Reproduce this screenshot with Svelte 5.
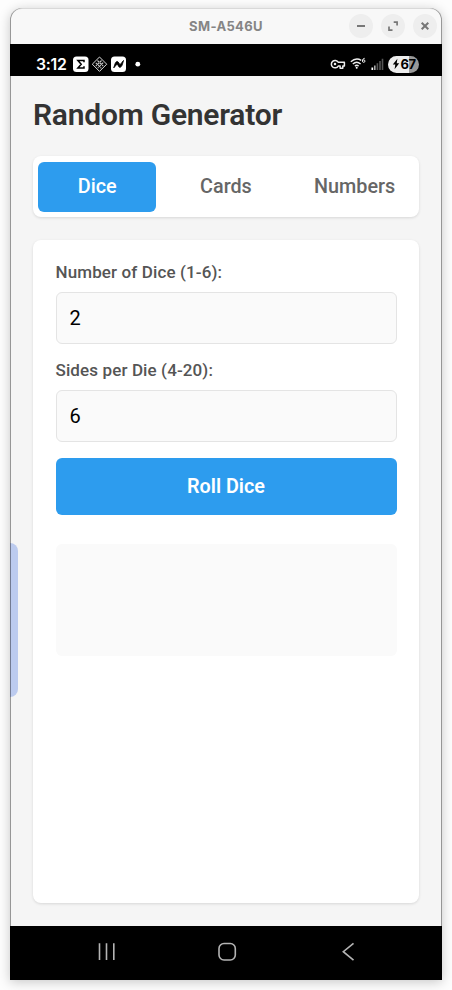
<script>
  let tab = $state('Dice');
  let dice = $state('2');
  let sides = $state('6');
  const tabs = ['Dice', 'Cards', 'Numbers'];
</script>

<div class="desktop">
  <div class="window">
    <header class="titlebar">
      <span class="device">SM-A546U</span>
      <div class="controls">
        <button aria-label="Minimize"><svg viewBox="0 0 24 24"><path d="M8 12h8" /></svg></button>
        <button aria-label="Maximize"><svg viewBox="0 0 24 24"><path d="M12.700 8.200h3.400v3.300M8 12.500v3.600h3.500" class="thin" /></svg></button>
        <button aria-label="Close"><svg viewBox="0 0 24 24"><path d="M8.700 8.700l6.600 6.600M15.300 8.700l-6.600 6.600" /></svg></button>
      </div>
    </header>

    <div class="status">
      <span class="clock">3:12</span>
      <svg class="notes" width="70" height="18" viewBox="0 0 70 18">
        <rect x="0" y="1.500" width="15.500" height="15.500" rx="3.500" fill="#fff" />
        <path d="M11 7.200V5.500H4.900L8.200 9.200 4.900 13h6.100v-1.700" fill="none" stroke="#000" stroke-width="1.500" />
        <path d="M26.500 2l7.200 7.200-7.200 7.200-7.200-7.200z" fill="none" stroke="#ddd" stroke-width="1" />
        <path d="M24.500 5.500l5.700 5.700M22.800 7.800l5.500 5.500M28.500 5.500l-5.700 5.700M30.200 7.700l-5.500 5.500" fill="none" stroke="#ccc" stroke-width="1.100" stroke-dasharray="2.500 .8" />
        <rect x="38" y="1.500" width="15" height="15.500" rx="3.500" fill="#fff" />
        <path d="M40.800 12.800c.8-2.500 1.500-6.300 3.400-6.300 1.500 0 1.700 2.900 2.800 2.900S48.600 7.500 50.500 5.500c-.8 2.700-1.600 6.800-3.600 6.800-1.500 0-1.600-2.900-2.700-2.900-1 0-1.600 1.600-3.400 3.400z" fill="#000" stroke="#000" stroke-width=".9" />
        <circle cx="64.800" cy="9.200" r="2.400" fill="#fff" />
      </svg>
      <svg class="signals" width="54" height="18" viewBox="0 0 54 18">
        <path d="M8.200 7.200a3.700 3.700 0 1 0 0 3.900h1.900v2.100h2.700v-2.100h1.600V7.200z" fill="none" stroke="#eee" stroke-width="1.500" stroke-linejoin="round" />
        <circle cx="5" cy="9.100" r="1.250" fill="#eee" />
        <path d="M20.800 6.800c3.300-3.100 7.100-3.500 10.400-1.500M22.800 9c2.300-2.100 5.500-2.100 7.800 0M24.900 11.100c1.200-1 2.500-1 3.700 0" fill="none" stroke="#eee" stroke-width="1.400" />
        <circle cx="26.700" cy="12.800" r="1" fill="#fff" />
        <path d="M34.700 3.300c-1.700.1-2.300 1.400-2.300 2.700" fill="none" stroke="#eee" stroke-width="1" />
        <circle cx="33.700" cy="6.100" r="1.250" fill="none" stroke="#eee" stroke-width="1" />
        <path d="M42.300 12.500V15" stroke="#fff" stroke-width="1.700" />
        <path d="M44.800 10.500V15" stroke="#aaa" stroke-width="1.600" />
        <path d="M47.400 8.200V15M50 6V15M52.500 3.800V15" stroke="#555" stroke-width="1.600" />
      </svg>
      <div class="battery">
        <svg width="8" height="12" viewBox="0 0 8 12"><path d="M5.400.8L.8 6.500h2.500L2.600 11.200 7.200 5.300H4.700z" fill="#000" /></svg>
        <span>67</span>
      </div>
    </div>

    <main class="app">
      <div class="edge-panel"></div>
      <h1>Random Generator</h1>
      <nav class="tabs">
        {#each tabs as name}
          <button class:active={tab === name} onclick={() => (tab = name)}>{name}</button>
        {/each}
      </nav>
      <section class="card">
        <label for="dice">Number of Dice (1-6):</label>
        <input id="dice" bind:value={dice} />
        <label for="sides">Sides per Die (4-20):</label>
        <input id="sides" bind:value={sides} />
        <button class="roll">Roll Dice</button>
        <div class="result"></div>
      </section>
    </main>

    <footer class="navbar">
      <svg width="432" height="54" viewBox="0 0 432 54" fill="none" stroke="#b4b4b4" stroke-width="1.600">
        <path d="M89.500 17.300V34M96.500 17.300V34M103.800 17.300V34" />
        <rect x="209" y="17.500" width="16.300" height="16.500" rx="5" />
        <path d="M343.500 17.300L333.300 25.700l10.200 8.400" />
      </svg>
    </footer>
  </div>
</div>

<style>
  :global(body) {
    margin: 0;
    background: #fff;
  }
  .desktop {
    box-sizing: border-box;
    height: 990px;
    padding: 8px 10px 10px;
    overflow: hidden;
    background: #fdfdfd;
    font-family: Roboto, sans-serif;
  }
  button {
    border: 0;
    padding: 0;
    font-family: inherit;
  }
  .window {
    position: relative;
    display: flex;
    flex-direction: column;
    width: 432px;
    height: 972px;
    border-radius: 12px 12px 0 0;
    box-shadow: 0 2px 12px rgba(0, 0, 0, 0.220);
  }
  .window::after {
    content: '';
    position: absolute;
    inset: 0;
    border-radius: inherit;
    box-shadow: inset 0 0 0 1px rgba(0, 0, 0, 0.120), inset 1px 0 0 rgba(0, 0, 0, 0.300), inset -1px 0 0 rgba(0, 0, 0, 0.300);
    pointer-events: none;
  }
  .titlebar {
    display: grid;
    grid-template-columns: 1fr auto 1fr;
    align-items: center;
    height: 36px;
    border-radius: 12px 12px 0 0;
    background: #f8f8f8;
  }
  .device {
    grid-column: 2;
    padding-bottom: 1px;
    color: #858585;
    font: 700 13px/16px Inter, sans-serif;
    letter-spacing: 0.350px;
  }
  .controls {
    display: flex;
    justify-content: flex-end;
    gap: 8px;
    padding-right: 5px;
  }
  .controls button {
    width: 24px;
    height: 24px;
    border-radius: 50%;
    background: #eee;
  }
  .controls svg {
    display: block;
    fill: none;
    stroke: #777;
    stroke-width: 2;
  }
  .controls .thin {
    stroke-width: 1.700;
  }
  .status {
    display: flex;
    align-items: center;
    box-sizing: border-box;
    height: 32px;
    padding: 8px 23px 0 26px;
    background: #000;
    color: #fff;
  }
  .clock {
    width: 37px;
    padding-top: 2px;
    font: 600 15.800px/18px Inter, sans-serif;
    letter-spacing: -0.250px;
  }
  .signals {
    margin-left: auto;
    margin-right: 4px;
  }
  .battery {
    display: flex;
    align-items: center;
    justify-content: center;
    width: 31px;
    height: 17px;
    border-radius: 9px;
    background: linear-gradient(90deg, #eee 67%, #999 67%);
    color: #000;
    font: 700 13px/17px Inter, sans-serif;
    letter-spacing: -0.600px;
  }
  .battery span {
    margin-left: 1px;
  }
  .app {
    position: relative;
    display: flex;
    flex-direction: column;
    box-sizing: border-box;
    height: 850px;
    padding: 19px 23px 23px;
    background: #f5f5f5;
  }
  .edge-panel {
    position: absolute;
    left: 0;
    top: 467px;
    width: 8px;
    height: 154px;
    border-radius: 0 8px 8px 0;
    background: #bccbef;
  }
  h1 {
    margin: 0 0 21px;
    color: #333;
    font-size: 30px;
    font-weight: 600;
    line-height: 40px;
    letter-spacing: -0.230px;
    white-space: nowrap;
  }
  .tabs {
    display: flex;
    box-sizing: border-box;
    height: 61px;
    padding: 6px 5.500px 5px 5.400px;
    border-radius: 8px;
    background: #fff;
    box-shadow: 0 1px 3px rgba(0, 0, 0, 0.120);
  }
  .tabs button {
    flex: 1;
    margin-right: 11px;
    padding-bottom: 1px;
    border-radius: 6px;
    background: transparent;
    color: #666;
    font-size: 19.800px;
    font-weight: 500;
  }
  .tabs button:last-child {
    margin-right: 0;
  }
  .tabs .active {
    background: #2d9cee;
    color: #fff;
  }
  .card {
    display: flex;
    flex-direction: column;
    box-sizing: border-box;
    flex: 1;
    margin-top: 23px;
    padding: 21px 22.500px;
    border-radius: 8px;
    background: #fff;
    box-shadow: 0 1px 3px rgba(0, 0, 0, 0.120);
  }
  label {
    margin-bottom: 9px;
    color: #555;
    font-size: 17px;
    font-weight: 500;
    line-height: 22px;
    letter-spacing: 0.120px;
  }
  input {
    box-sizing: border-box;
    width: 100%;
    height: 52px;
    margin: 0 0 15px;
    padding: 0 13px 1px;
    border: 1px solid #e4e4e4;
    border-radius: 6px;
    background: #fafafa;
    color: #000;
    font: 400 20px/24px Roboto, sans-serif;
  }
  .roll {
    height: 57px;
    margin-top: 1px;
    border-radius: 6px;
    background: #2d9cee;
    color: #fff;
    font-size: 19.800px;
    font-weight: 600;
  }
  .result {
    height: 112px;
    margin-top: 29px;
    border-radius: 6px;
    background: #fafafa;
  }
  .navbar {
    height: 54px;
    background: #000;
  }
  .navbar svg {
    display: block;
  }
</style>
